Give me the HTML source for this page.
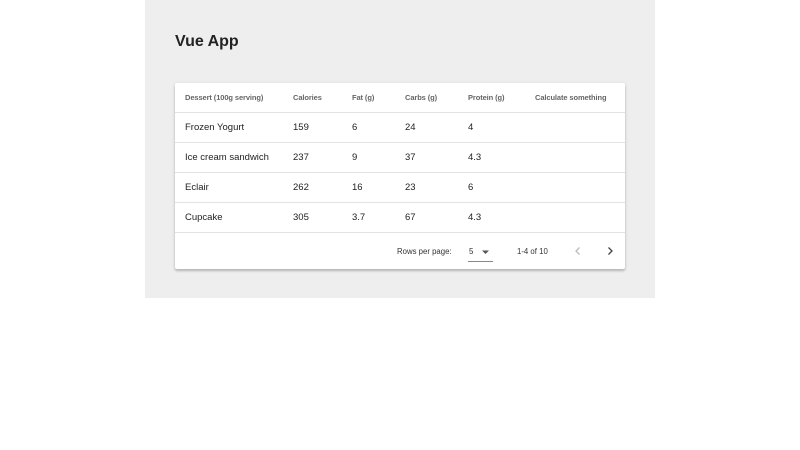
<!DOCTYPE html>
<html><head><style>
body{margin:0;width:800px;height:450px;background:#fff;font-family:"Liberation Sans",sans-serif;position:relative;overflow:hidden}
.panel{position:absolute;left:145px;top:0;width:510px;height:298px;background:#eeeeee}
h1{position:absolute;left:175px;top:33px;margin:0;font-size:16px;font-weight:bold;color:#222}
.card{position:absolute;left:175px;top:83px;width:450px;height:186px;background:#fff;box-shadow:0 2px 2px rgba(0,0,0,.18),0 1px 4px rgba(0,0,0,.1);border-radius:2px}
.row{position:absolute;left:0;width:450px;border-bottom:1px solid #e3e3e3}
.row span{position:absolute;top:0}
.h span{font-size:7.5px;font-weight:bold;color:#666;line-height:29px;letter-spacing:-0.1px}
.d span{font-size:9.5px;color:#222;line-height:32px}
.f{position:absolute;font-size:8px;color:#333}
</style></head><body>
<div class="panel"></div>
<h1>Vue App</h1>
<div class="card">
<div class="row h" style="top:0;height:29px"><span style="left:10px">Dessert (100g serving)</span><span style="left:118px">Calories</span><span style="left:177px">Fat (g)</span><span style="left:230px">Carbs (g)</span><span style="left:293px">Protein (g)</span><span style="left:360px">Calculate something</span></div>
<div class="row d" style="top:29px;height:30px"><span style="left:10px">Frozen Yogurt</span><span style="left:118px">159</span><span style="left:177px">6</span><span style="left:230px">24</span><span style="left:293px">4</span></div>
<div class="row d" style="top:59px;height:30px"><span style="left:10px">Ice cream sandwich</span><span style="left:118px">237</span><span style="left:177px">9</span><span style="left:230px">37</span><span style="left:293px">4.3</span></div>
<div class="row d" style="top:89px;height:30px"><span style="left:10px">Eclair</span><span style="left:118px">262</span><span style="left:177px">16</span><span style="left:230px">23</span><span style="left:293px">6</span></div>
<div class="row d" style="top:119px;height:30px"><span style="left:10px">Cupcake</span><span style="left:118px">305</span><span style="left:177px">3.7</span><span style="left:230px">67</span><span style="left:293px">4.3</span></div>
<div class="f" style="left:222px;top:164px;font-size:7.8px">Rows per page:</div>
<div class="f" style="left:294px;top:164px">5</div>
<svg style="position:absolute;left:306px;top:166px" width="10" height="6"><path d="M1 1.5 L4.5 5 L8 1.5Z" fill="#555"/></svg>
<div style="position:absolute;left:293px;top:178px;width:25px;height:1px;background:#888"></div>
<div class="f" style="left:342px;top:164px;font-size:7.8px">1-4 of 10</div>
<svg style="position:absolute;left:398px;top:163px" width="10" height="10"><path d="M6.5 1.5 L3 5 L6.5 8.5" stroke="#bbb" stroke-width="1.3" fill="none"/></svg>
<svg style="position:absolute;left:430px;top:163px" width="10" height="10"><path d="M3.5 1.5 L7 5 L3.5 8.5" stroke="#444" stroke-width="1.3" fill="none"/></svg>
</div>
</body></html>
